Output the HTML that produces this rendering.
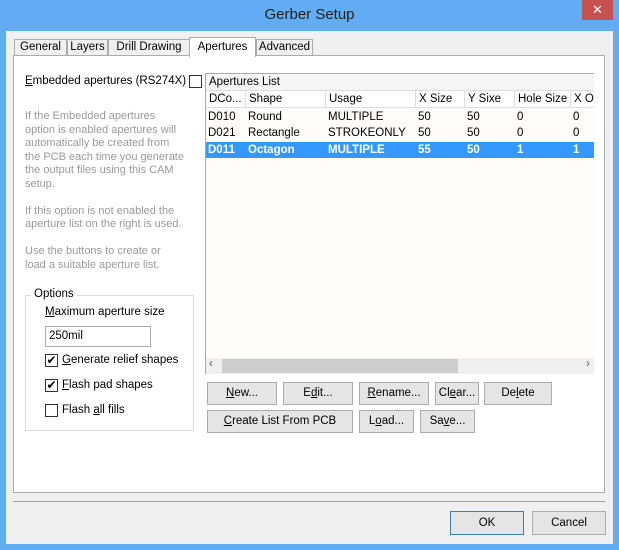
<!DOCTYPE html><html><head><style>
*{box-sizing:border-box}body{margin:0;width:619px;height:550px;background:#61acf3;font-family:"Liberation Sans",sans-serif;font-size:11.5px;color:#000;position:relative;overflow:hidden}
.a{position:absolute}
.btn{position:absolute;background:#e5e5e5;border:1px solid #acacac;text-align:center;line-height:20px;font-size:11.5px}
.cb{position:absolute;width:13px;height:13px;border:1px solid #333;background:#fff;font-size:12px;line-height:11px;text-align:center}
.g{color:#9a9a9a;line-height:13.5px;font-size:11px;white-space:nowrap}
.tab{position:absolute;top:39px;height:17px;border:1px solid #acacac;background:#f0f0f0;line-height:15px;text-align:center}
.h{position:absolute;top:91px;height:17px;line-height:17px;border-right:1px solid #ddd;padding-left:3px}
</style></head><body>
<div class="a" style="left:0;top:0;width:619px;height:31px;text-align:center;line-height:30px;font-size:15px;color:#222">Gerber Setup</div>
<div class="a" style="left:582px;top:0;width:31px;height:20px;background:#c75050;color:#fff;text-align:center;line-height:19px;font-size:13px">✕</div>
<div class="a" style="left:6px;top:31px;width:607px;height:513px;background:#f0f0f0"></div>
<div class="a" style="left:13px;top:55px;width:592px;height:438px;background:#fff;border:1px solid #acacac"></div>
<div class="tab" style="left:14px;width:53px">General</div>
<div class="tab" style="left:67px;width:41px">Layers</div>
<div class="tab" style="left:108px;width:82px">Drill Drawing</div>
<div class="tab" style="left:189px;top:37px;height:20px;width:67px;background:#fff;border-bottom:none;line-height:19px">Apertures</div>
<div class="tab" style="left:256px;width:57px">Advanced</div>
<div class="a" style="left:25px;top:75px"><u>E</u>mbedded apertures (RS274X)</div>
<div class="cb" style="left:189px;top:75px"></div>
<div class="a g" style="left:25px;top:110px">If the Embedded apertures<br>option is enabled apertures will<br>automatically be created from<br>the PCB each time you generate<br>the output files using this CAM<br>setup.<br><br>If this option is not enabled the<br>aperture list on the right is used.<br><br>Use the buttons to create or<br>load a suitable aperture list.</div>
<div class="a" style="left:25px;top:295px;width:169px;height:136px;border:1px solid #dcdcdc"></div>
<div class="a" style="left:31px;top:288px;background:#fff;padding:0 3px">Options</div>
<div class="a" style="left:45px;top:306px"><u>M</u>aximum aperture size</div>
<div class="a" style="left:45px;top:326px;width:106px;height:21px;border:1px solid #acacac;line-height:19px;padding-left:3px">250mil</div>
<div class="cb" style="left:45px;top:354px">✔</div><div class="a" style="left:62px;top:354px"><u>G</u>enerate relief shapes</div>
<div class="cb" style="left:45px;top:379px">✔</div><div class="a" style="left:62px;top:379px"><u>F</u>lash pad shapes</div>
<div class="cb" style="left:45px;top:404px"></div><div class="a" style="left:62px;top:404px">Flash <u>a</u>ll fills</div>
<div class="a" style="left:205px;top:73px;width:389px;height:301px;background:#fffcf9;border:1px solid #acacac;border-right:none;overflow:hidden"></div>
<div class="a" style="left:206px;top:74px;width:388px;height:17px;background:#f5f5f5;border-bottom:1px solid #ddd;padding-left:3px;line-height:16px">Apertures List</div>
<div class="a" style="left:206px;top:91px;width:388px;height:17px;background:#fff;border-bottom:1px solid #ddd"></div>
<div class="h" style="left:206px;width:40px">DCo...</div><div class="h" style="left:246px;width:80px">Shape</div><div class="h" style="left:326px;width:90px">Usage</div><div class="h" style="left:416px;width:49px">X Size</div><div class="h" style="left:465px;width:50px">Y Sixe</div><div class="h" style="left:515px;width:56px">Hole Size</div><div class="h" style="left:571px;width:23px;border:none;overflow:hidden;white-space:nowrap">X O</div>
<div class="a" style="left:206px;top:142px;width:388px;height:16px;background:#3399ff"></div>
<div class="a" style="left:0;top:109px;line-height:16.5px">
<div class="a" style="left:208px;top:0">D010</div><div class="a" style="left:248px;top:0">Round</div><div class="a" style="left:328px;top:0">MULTIPLE</div><div class="a" style="left:418px;top:0">50</div><div class="a" style="left:467px;top:0">50</div><div class="a" style="left:517px;top:0">0</div><div class="a" style="left:573px;top:0">0</div>
<div class="a" style="left:208px;top:16px">D021</div><div class="a" style="left:248px;top:16px">Rectangle</div><div class="a" style="left:328px;top:16px">STROKEONLY</div><div class="a" style="left:418px;top:16px">50</div><div class="a" style="left:467px;top:16px">50</div><div class="a" style="left:517px;top:16px">0</div><div class="a" style="left:573px;top:16px">0</div>
<div style="color:#fff;font-weight:bold"><div class="a" style="left:208px;top:33px">D011</div><div class="a" style="left:248px;top:33px">Octagon</div><div class="a" style="left:328px;top:33px">MULTIPLE</div><div class="a" style="left:418px;top:33px">55</div><div class="a" style="left:467px;top:33px">50</div><div class="a" style="left:517px;top:33px">1</div><div class="a" style="left:573px;top:33px">1</div></div>
</div>
<div class="a" style="left:206px;top:358px;width:388px;height:16px;background:#f0f0f0"></div>
<div class="a" style="left:222px;top:359px;width:236px;height:14px;background:#cdcdcd"></div>
<div class="a" style="left:209px;top:358px;color:#555">‹</div><div class="a" style="left:586px;top:358px;color:#555">›</div>
<div class="btn" style="left:207px;top:382px;width:70px;height:23px"><u>N</u>ew...</div>
<div class="btn" style="left:283px;top:382px;width:70px;height:23px">E<u>d</u>it...</div>
<div class="btn" style="left:359px;top:382px;width:70px;height:23px"><u>R</u>ename...</div>
<div class="btn" style="left:435px;top:382px;width:44px;height:23px">Cl<u>e</u>ar...</div>
<div class="btn" style="left:484px;top:382px;width:68px;height:23px">De<u>l</u>ete</div>
<div class="btn" style="left:207px;top:410px;width:146px;height:23px"><u>C</u>reate List From PCB</div>
<div class="btn" style="left:359px;top:410px;width:55px;height:23px">L<u>o</u>ad...</div>
<div class="btn" style="left:420px;top:410px;width:55px;height:23px">Sa<u>v</u>e...</div>
<div class="a" style="left:13px;top:501px;width:592px;height:1px;background:#a0a0a0"></div>
<div class="btn" style="left:450px;top:511px;width:74px;height:24px;line-height:22px;border-color:#3c7fb1">OK</div>
<div class="btn" style="left:532px;top:511px;width:74px;height:24px;line-height:22px">Cancel</div>
</body></html>
